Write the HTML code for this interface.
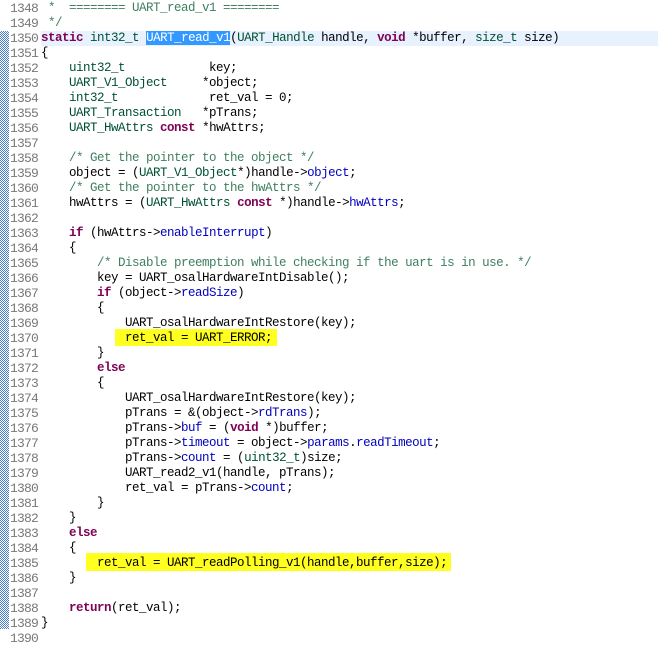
<!DOCTYPE html>
<html><head><style>
body{margin:0;width:659px;height:643px;background:#fff;overflow:hidden;position:relative;font-family:"Liberation Mono",monospace;font-size:12.5px;letter-spacing:-0.5px;}
.bar{position:absolute;left:0;top:31px;width:9px;height:598px;background-image:repeating-conic-gradient(#4a7fd0 0 25%,#fff 0 50%);background-size:2px 2px;}
.cur{position:absolute;left:41px;top:31px;width:617px;height:15px;background:#e8f2fe;}
.ln{position:absolute;left:8px;top:1px;width:30px;text-align:right;color:#787878;line-height:15px;white-space:pre;font-size:13px;letter-spacing:-0.8px;}
.code{position:absolute;left:41px;top:1px;line-height:15px;white-space:pre;color:#000;}
.c{color:#3f7f5f}.k{color:#7f0055;font-weight:bold}.t{color:#005032}.f{color:#0000c0}
.sel{background:#3399ff;color:#fff}
.hl{position:absolute;background:#ffff20;}
</style></head><body>
<div class="bar"></div>
<div class="cur"></div>
<div class="hl" style="left:115px;top:329px;width:162px;height:17px"></div>
<div class="hl" style="left:86px;top:553px;width:365px;height:18px"></div>
<div class="ln">1348
1349
1350
1351
1352
1353
1354
1355
1356
1357
1358
1359
1360
1361
1362
1363
1364
1365
1366
1367
1368
1369
1370
1371
1372
1373
1374
1375
1376
1377
1378
1379
1380
1381
1382
1383
1384
1385
1386
1387
1388
1389
1390</div>
<div class="code"><span class="c"> *  ======== UART_read_v1 ========</span>
<span class="c"> */</span>
<span class="k">static</span> <span class="t">int32_t</span> <span class="sel">UART_read_v1</span>(<span class="t">UART_Handle</span> handle, <span class="k">void</span> *buffer, <span class="t">size_t</span> size)
{
    <span class="t">uint32_t</span>            key;
    <span class="t">UART_V1_Object</span>     *object;
    <span class="t">int32_t</span>             ret_val = 0;
    <span class="t">UART_Transaction</span>   *pTrans;
    <span class="t">UART_HwAttrs</span> <span class="k">const</span> *hwAttrs;

    <span class="c">/* Get the pointer to the object */</span>
    object = (<span class="t">UART_V1_Object</span>*)handle-&gt;<span class="f">object</span>;
    <span class="c">/* Get the pointer to the hwAttrs */</span>
    hwAttrs = (<span class="t">UART_HwAttrs</span> <span class="k">const</span> *)handle-&gt;<span class="f">hwAttrs</span>;

    <span class="k">if</span> (hwAttrs-&gt;<span class="f">enableInterrupt</span>)
    {
        <span class="c">/* Disable preemption while checking if the uart is in use. */</span>
        key = UART_osalHardwareIntDisable();
        <span class="k">if</span> (object-&gt;<span class="f">readSize</span>)
        {
            UART_osalHardwareIntRestore(key);
            ret_val = UART_ERROR;
        }
        <span class="k">else</span>
        {
            UART_osalHardwareIntRestore(key);
            pTrans = &amp;(object-&gt;<span class="f">rdTrans</span>);
            pTrans-&gt;<span class="f">buf</span> = (<span class="k">void</span> *)buffer;
            pTrans-&gt;<span class="f">timeout</span> = object-&gt;<span class="f">params</span>.<span class="f">readTimeout</span>;
            pTrans-&gt;<span class="f">count</span> = (<span class="t">uint32_t</span>)size;
            UART_read2_v1(handle, pTrans);
            ret_val = pTrans-&gt;<span class="f">count</span>;
        }
    }
    <span class="k">else</span>
    {
        ret_val = UART_readPolling_v1(handle,buffer,size);
    }

    <span class="k">return</span>(ret_val);
}
</div>
</body></html>
